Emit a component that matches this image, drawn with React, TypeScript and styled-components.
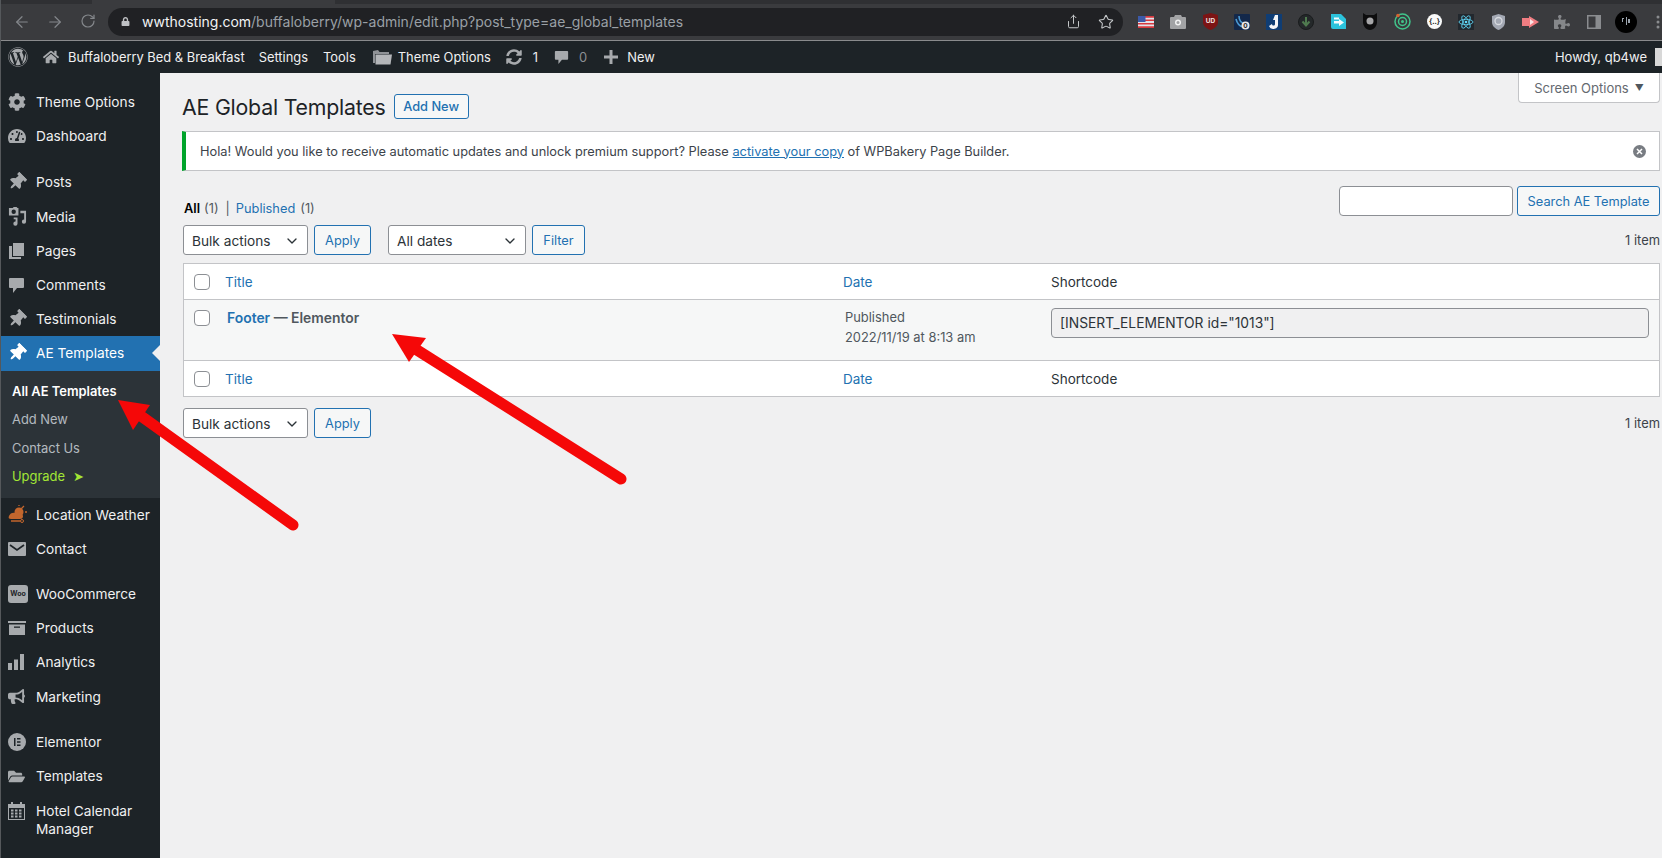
import React from 'react';
import styled, { createGlobalStyle } from 'styled-components';
import { ArrowLeft, ArrowRight, RotateCw, Share, Star, ChevronDown } from 'lucide-react';
import {
  FaWordpress, FaCog, FaTachometerAlt, FaThumbtack, FaHome, FaFolderOpen, FaSyncAlt, FaPuzzlePiece, FaBullhorn, FaLock,
} from 'react-icons/fa';

const GlobalStyle = createGlobalStyle`
  html, body { margin: 0; padding: 0; background: #f0f0f1; overflow: hidden; }
  * { box-sizing: border-box; }
  body { font-family: Inter, "Liberation Sans", sans-serif; font-size: 13.4px; color: #3c434a; }
`;

const Page = styled.div`
  position: relative;
  width: 1662px;
  height: 858px;
  overflow: hidden;
  display: flex;
  flex-direction: column;
  border-left: 1px solid #55585b;
`;

/* Browser chrome */
const TabStrip = styled.div`
  height: 4px;
  background: #2f3033;
  display: flex;
`;
const TabPiece = styled.div`
  width: 243px;
  margin-left: 91px;
  background: #3a3b3e;
`;
const Toolbar = styled.div`
  height: 37px;
  background: #3a3b3e;
  border-bottom: 1px solid #8a8b8d;
  display: flex;
  align-items: center;
  overflow: hidden;
  flex: none;
  padding-bottom: 1px;
`;
const NavButtons = styled.div`
  display: flex;
  padding-left: 4px;
  width: 107px;
  flex: none;
  color: #84878b;
`;
const NavSlot = styled.div`
  width: 33px;
  display: flex;
  justify-content: center;
`;
const UrlBar = styled.div`
  width: 1015px;
  height: 28px;
  border-radius: 14px;
  background: #202124;
  display: flex;
  align-items: center;
  padding: 0 9px 0 13px;
  flex: none;
`;
const LockGlyph = styled.span`
  color: #bfc1c4;
  font-size: 9px;
  display: flex;
  margin-right: 12px;
`;
const UrlHost = styled.span`
  color: #f1f3f4;
  font-size: 14px;
`;
const UrlPath = styled.span`
  color: #9aa0a6;
  font-size: 14px;
`;
const UrlActions = styled.div`
  margin-left: auto;
  display: flex;
  align-items: center;
  gap: 17px;
  color: #c4c7c9;
`;
const Extensions = styled.div`
  display: flex;
  margin-left: 7px;
  flex: none;
`;
const ExtSlot = styled.div`
  width: 32px;
  height: 24px;
  display: flex;
  align-items: center;
  justify-content: center;
  color: #85878a;
`;

/* Admin bar */
const AdminBar = styled.div`
  height: 32px;
  flex: none;
  background: #1d2327;
  color: #f0f0f1;
  display: flex;
  align-items: center;
  padding-left: 7px;
  font-size: 12.9px;
`;
const BarIcon = styled.span<{ $w: number; $mr: number }>`
  width: ${(p) => p.$w}px;
  margin-right: ${(p) => p.$mr}px;
  flex: none;
  display: flex;
  justify-content: center;
  color: #a7aaad;
`;
const BarText = styled.span<{ $mr: number; $dim?: boolean }>`
  margin-right: ${(p) => p.$mr}px;
  white-space: nowrap;
  color: ${(p) => (p.$dim ? '#8c8f94' : '#f0f0f1')};
`;
const BarRight = styled.div`
  margin-left: auto;
  display: flex;
  align-items: center;
  gap: 8px;
  font-size: 13px;
`;
const Avatar = styled.div`
  width: 7px;
  height: 18px;
  background: #d8d8d8;
`;

/* Columns */
const Columns = styled.div`
  flex: 1;
  display: flex;
  min-height: 0;
`;

/* Sidebar */
const Sidebar = styled.nav`
  width: 159px;
  flex: none;
  background: #1d2327;
  padding-top: 12px;
  color: #f0f0f1;
  font-size: 13.7px;
`;
const MenuItem = styled.div<{ $gap?: number; $active?: boolean; $tall?: boolean }>`
  position: relative;
  height: ${(p) => (p.$tall ? '52px' : '34.2px')};
  margin-top: ${(p) => p.$gap ?? 0}px;
  display: flex;
  align-items: ${(p) => (p.$tall ? 'flex-start' : 'center')};
  padding-top: ${(p) => (p.$tall ? '8px' : '0')};
  background: ${(p) => (p.$active ? '#2271b1' : 'transparent')};
  color: ${(p) => (p.$active ? '#fff' : '#f0f0f1')};
  line-height: 18px;
`;
const MenuIcon = styled.span<{ $active?: boolean }>`
  width: 35px;
  flex: none;
  padding-left: 7px;
  display: flex;
  align-items: center;
  color: ${(p) => (p.$active ? '#fff' : '#a7aaad')};
`;
const MenuLabel = styled.span`
  white-space: pre-line;
`;
const ActiveNotch = styled.span`
  position: absolute;
  right: 0;
  top: 50%;
  margin-top: -8px;
  border: 8px solid transparent;
  border-right-color: #f0f0f1;
  border-left-width: 0;
`;
const SubMenu = styled.div`
  background: #2c3338;
  padding: 7px 0 0 11px;
  height: 127.500px;
  font-size: 12.9px;
`;
const SubItem = styled.div<{ $current?: boolean; $accent?: boolean }>`
  height: 28.3px;
  display: flex;
  align-items: center;
  gap: 8px;
  font-weight: ${(p) => (p.$current ? 600 : 400)};
  color: ${(p) => (p.$current ? '#fff' : p.$accent ? '#a3e635' : 'rgba(240,246,252,0.7)')};
`;

/* Main */
const Main = styled.main`
  position: relative;
  flex: 1;
  padding: 21px 2px 0 22px;
  min-width: 0;
`;
const ScreenTab = styled.div`
  position: absolute;
  top: 0;
  right: 2px;
  width: 142px;
  height: 30px;
  background: #fff;
  border: 1px solid #c3c4c7;
  border-top: 0;
  border-radius: 0 0 4px 4px;
  display: flex;
  align-items: center;
  justify-content: center;
  gap: 6px;
  font-size: 13px;
  color: #646970;
`;
const Caret = styled.span`
  font-size: 9px;
  color: #50575e;
`;
const TitleRow = styled.div`
  display: flex;
  align-items: center;
  gap: 8px;
  height: 25px;
`;
const Heading = styled.h1`
  margin: 0;
  font-size: 21.3px;
  font-weight: 400;
  color: #1d2327;
  letter-spacing: -0.2px;
`;
const Button = styled.div<{ $w: number; $h?: number; $solid?: boolean }>`
  width: ${(p) => p.$w}px;
  height: ${(p) => p.$h ?? 30}px;
  padding-top: ${(p) => (p.$h ? 0 : 1)}px;
  flex: none;
  border: 1px solid #2271b1;
  border-radius: 3px;
  background: #f6f7f7;
  color: #2271b1;
  font-size: 12.8px;
  font-weight: ${(p) => (p.$solid ? 500 : 400)};
  display: flex;
  align-items: center;
  justify-content: center;
`;
const Notice = styled.div`
  margin-top: 12px;
  height: 40px;
  background: #fff;
  border: 1px solid #c3c4c7;
  border-left: 4px solid #00a32a;
  display: flex;
  align-items: center;
  padding-left: 14px;
  padding-right: 13px;
  font-size: 12.8px;
  color: #3c434a;
`;
const NoticeLink = styled.a`
  color: #2271b1;
  text-decoration: underline;
`;
const Dismiss = styled.span`
  margin-left: auto;
  width: 13px;
  height: 13px;
  border-radius: 50%;
  background: #787c82;
  display: flex;
  align-items: center;
  justify-content: center;
`;
const FilterRow = styled.div`
  margin-top: 15px;
  height: 30px;
  display: flex;
  align-items: flex-end;
  justify-content: space-between;
`;
const StatusLinks = styled.div`
  padding-left: 2px;
  display: flex;
  line-height: 16px;
  font-size: 12.8px;
  color: #50575e;
  margin-bottom: -1px;
`;
const StatusStrong = styled.span`
  color: #000;
  font-weight: 600;
  margin-right: 4px;
`;
const StatusDivider = styled.span`
  margin: 0 6px 0 7px;
`;
const StatusLink = styled.span`
  color: #2271b1;
  margin-right: 5px;
`;
const SearchBox = styled.div`
  display: flex;
  gap: 4px;
`;
const SearchInput = styled.input`
  width: 174px;
  height: 30px;
  background: #fff;
  border: 1px solid #8c8f94;
  border-radius: 4px;
`;
const TableNav = styled.div<{ $top: number }>`
  margin-top: ${(p) => p.$top}px;
  height: 30px;
  padding-left: 1px;
  display: flex;
  align-items: center;
  gap: 6px;
`;
const SelectBox = styled.div<{ $w: number; $ml?: number }>`
  width: ${(p) => p.$w}px;
  margin-left: ${(p) => p.$ml ?? 0}px;
  height: 30px;
  flex: none;
  background: #fff;
  border: 1px solid #8c8f94;
  border-radius: 3px;
  padding: 1px 7px 0 8px;
  display: flex;
  align-items: center;
  justify-content: space-between;
  color: #2c3338;
  font-size: 13.7px;
`;
const ItemCount = styled.span`
  margin-left: auto;
  font-size: 12.9px;
  color: #3c434a;
`;
const Table = styled.div`
  margin-top: 8px;
  border: 1px solid #c3c4c7;
  background: #fff;
  margin-left: 1px;
`;
const Row = styled.div<{ $h: number; $body?: boolean }>`
  height: ${(p) => p.$h}px;
  display: grid;
  grid-template-columns: 33px 618px 208px 1fr;
  background: ${(p) => (p.$body ? '#f6f7f7' : '#fff')};
  border-top: ${(p) => (p.$body ? '1px solid #c3c4c7' : 'none')};
  border-bottom: ${(p) => (p.$body ? '1px solid #c3c4c7' : 'none')};
  font-size: 13.5px;
`;
const Cell = styled.div<{ $top?: number; $pl?: number }>`
  padding-left: ${(p) => p.$pl ?? 8}px;
  padding-top: ${(p) => p.$top ?? 0}px;
  display: flex;
  align-items: ${(p) => (p.$top !== undefined ? 'flex-start' : 'center')};
`;
const CheckCell = styled(Cell)`
  padding-left: 10px;
`;
const Check = styled.span`
  width: 16px;
  height: 16px;
  flex: none;
  background: #fff;
  border: 1px solid #8c8f94;
  border-radius: 4px;
`;
const ColLink = styled.span`
  color: #2271b1;
`;
const ColLabel = styled.span`
  color: #2c3338;
`;
const RowTitle = styled.span`
  padding-left: 2px;
  font-size: 13.9px;
  font-weight: 600;
  color: #50575e;
  line-height: 18px;
`;
const RowLink = styled.span`
  color: #2271b1;
`;
const DateText = styled.div`
  padding-left: 2px;
  font-size: 12.9px;
  line-height: 20px;
  color: #50575e;
`;
const ShortcodeInput = styled.input`
  width: 598px;
  height: 30px;
  margin-top: -1px;
  padding: 0 8px;
  background: #f0f0f1;
  border: 1px solid #8c8f94;
  border-radius: 4px;
  font-family: inherit;
  font-size: 13.8px;
  color: #2c3338;
`;
const ArrowLayer = styled.svg`
  position: absolute;
  left: -1px;
  top: 0;
  pointer-events: none;
`;

/* Drawn icons */
const s = { display: 'block' } as const;
const pin = { display: 'block', transform: 'rotate(45deg)' } as const;
const MediaIcon = () => (
  <svg width="19" height="19" viewBox="0 0 20 20" fill="currentColor" style={s}>
    <path d="M1 1h4l1-1h3l1 1h1v8H1z" />
    <circle cx="6" cy="5" r="2.300" fill="#1d2327" />
    <path d="M13 4h6v11.500a2.200 2.200 0 1 1-2-2.200V6.500h-4z" />
    <path d="M6 11h4v6.500a2.200 2.200 0 1 1-2-2.200V13H6z" />
  </svg>
);
const PagesIcon = () => (
  <svg width="17" height="18" viewBox="0 0 17 18" fill="currentColor" style={s}>
    <path d="M5 1h11v13H5z" />
    <path d="M1 4h3v11h9v2H1z" />
  </svg>
);
const CommentIcon = ({ size = 17 }: { size?: number }) => (
  <svg width={size} height={size} viewBox="0 0 17 17" fill="currentColor" style={s}>
    <path d="M2 1h13a1 1 0 0 1 1 1v8a1 1 0 0 1-1 1H9l-4 5v-5H2a1 1 0 0 1-1-1V2a1 1 0 0 1 1-1z" />
  </svg>
);
const BarFolderIcon = () => (
  <svg width="20" height="16" viewBox="0 0 20 16" style={s}>
    <path d="M1 2l5-1 1.500 2H17v2H3v9H1z" fill="#8f9296" />
    <path d="M3.500 5.500H20l-1.500 10H3.500z" fill="#b4b6b9" />
  </svg>
);
const WeatherIcon = () => (
  <svg width="20" height="20" viewBox="0 0 20 20" style={s}>
    <circle cx="11" cy="7" r="4.500" fill="#c2662d" />
    <path d="M1 11c1-3 4-4 7-3 3-1 7 0 7 3s-2 3-5 3H3c-2 0-3-1-2-3z" fill="#c2662d" />
    <path d="M3 16h9M13 4l3-3M17 7h2M11 1V0" stroke="#c2662d" strokeWidth="1.300" fill="none" />
    <circle cx="14" cy="16" r="1.500" fill="none" stroke="#c2662d" />
  </svg>
);
const MailIcon = () => (
  <svg width="18" height="14" viewBox="0 0 18 14" style={s}>
    <rect width="18" height="14" rx="1" fill="currentColor" />
    <path d="M2 3l7 5 7-5" stroke="#1d2327" strokeWidth="1.700" fill="none" />
  </svg>
);
const WooMark = styled.span`
  width: 20px;
  height: 18px;
  border-radius: 3px;
  background: #a7aaad;
  color: #1d2327;
  font-size: 7px;
  font-weight: 700;
  display: flex;
  align-items: center;
  justify-content: center;
`;
const ProductsIcon = () => (
  <svg width="18" height="14" viewBox="0 0 18 14" fill="currentColor" style={s}>
    <rect width="18" height="2" />
    <path d="M1 3.500h16V14H1z" />
    <rect x="6" y="5.500" width="6" height="1.300" fill="#1d2327" />
  </svg>
);
const BarsIcon = () => (
  <svg width="16" height="16" viewBox="0 0 16 16" fill="currentColor" style={s}>
    <rect y="9" width="4" height="7" />
    <rect x="6" y="5.500" width="4" height="10.500" />
    <rect x="12" width="4" height="16" />
  </svg>
);
const ElementorIcon = () => (
  <svg width="18" height="18" viewBox="0 0 18 18" style={s}>
    <circle cx="9" cy="9" r="9" fill="currentColor" />
    <path d="M6 5h1.500v8H6zM9 5h3.500v1.500H9zM9 8.250h3.500v1.500H9zM9 11.500h3.500V13H9z" fill="#1d2327" />
  </svg>
);
const CalendarIcon = () => (
  <svg width="17" height="18" viewBox="0 0 17 18" style={s}>
    <rect x="0.500" y="2.500" width="16" height="15" fill="none" stroke="currentColor" />
    <rect x="0.500" y="2.500" width="16" height="3.500" fill="currentColor" />
    <rect x="3" y="0" width="2" height="4" fill="currentColor" />
    <rect x="12" y="0" width="2" height="4" fill="currentColor" />
    {[7.5, 10.5, 13.5].map((y) =>
      [3, 7, 11].map((x) => <rect key={`${x}-${y}`} x={x} y={y} width="2.500" height="2" fill="currentColor" />),
    )}
  </svg>
);
const PlusIcon = () => (
  <svg width="14" height="14" viewBox="0 0 14 14" fill="currentColor" style={s}>
    <path d="M5.500 0h3v5.500H14v3H8.500V14h-3V8.500H0v-3h5.500z" />
  </svg>
);

const extIcons = [
  <svg key="flag" width="16" height="12" viewBox="0 0 16 12" style={s}>
    <rect width="16" height="12" fill="#e2e2ea" />
    <path d="M0 0h16v1.700H0zM0 3.400h16v1.700H0zM0 6.900h16v1.700H0zM0 10.300h16V12H0z" fill="#d8383e" />
    <rect width="7.500" height="6" fill="#3c5aa8" />
  </svg>,
  <svg key="cam" width="16" height="14" viewBox="0 0 16 14" style={s}>
    <path d="M1 2h3l1-2h6l1 2h3a1 1 0 0 1 1 1v10a1 1 0 0 1-1 1H1a1 1 0 0 1-1-1V3a1 1 0 0 1 1-1z" fill="#a2a3a5" />
    <circle cx="8" cy="7.500" r="3" fill="#f2f2f2" />
    <circle cx="8" cy="7.500" r="1.500" fill="#a2a3a5" />
  </svg>,
  <svg key="ub" width="15" height="17" viewBox="0 0 15 17" style={s}>
    <path d="M7.500 0L15 2v7c0 4-3.500 6.500-7.500 8C3.500 15.500 0 13 0 9V2z" fill="#7c1414" />
    <text x="7.500" y="10" textAnchor="middle" fontSize="6.500" fontWeight="700" fill="#f3e6e6" fontFamily="Inter">UD</text>
  </svg>,
  <svg key="dns" width="16" height="16" viewBox="0 0 16 16" style={s}>
    <rect width="16" height="16" rx="1" fill="#13284a" />
    <path d="M2 5c1 4 3 7 7 8M5 2c0 4 2 7 6 8" stroke="#4a9ad4" strokeWidth="1.600" fill="none" />
    <circle cx="11.500" cy="11.500" r="4" fill="#e8e8e8" />
    <text x="11.500" y="14" textAnchor="middle" fontSize="6.500" fontWeight="700" fill="#222" fontFamily="Inter">0</text>
  </svg>,
  <svg key="j" width="16" height="16" viewBox="0 0 16 16" style={s}>
    <rect width="16" height="16" fill="#0f3d74" />
    <path d="M9 1h3v10c0 3-3 4-5 4s-3-1-4-3l3-2c0 2 3 2 3 0V6H7z" fill="#f4f6f8" />
  </svg>,
  <svg key="dl" width="16" height="16" viewBox="0 0 16 16" style={s}>
    <circle cx="8" cy="8" r="7.500" fill="#24282a" stroke="#1a1c1d" />
    <path d="M8 3v8M4.500 7.500L8 11.500l3.500-4" stroke="#4f7a4f" strokeWidth="2" fill="none" />
  </svg>,
  <svg key="doc" width="15" height="15" viewBox="0 0 15 15" style={s}>
    <path d="M0 0h10l5 5v10H2a2 2 0 0 1-2-2z" fill="#2cc3dc" />
    <path d="M3 3.500h5v2H3zM3 7h5V5l5 3.500L8 12V9.500H3z" fill="#f4fbfd" />
  </svg>,
  <svg key="cat" width="14" height="17" viewBox="0 0 14 17" style={s}>
    <path d="M0 0l3 2h8l3-2v9c0 4-3 8-7 8S0 13 0 9z" fill="#0d0d0e" />
    <circle cx="7" cy="8" r="3.500" fill="#a6a6a8" />
  </svg>,
  <svg key="ring" width="17" height="17" viewBox="0 0 17 17" style={s}>
    <circle cx="8.500" cy="8.500" r="7.500" fill="none" stroke="#41c48b" strokeWidth="1.500" />
    <circle cx="8.500" cy="8.500" r="4" fill="none" stroke="#41c48b" strokeWidth="1.500" />
    <circle cx="8.500" cy="8.500" r="1.500" fill="#41c48b" />
    <circle cx="4" cy="2.500" r="1.800" fill="#d8632f" />
  </svg>,
  <svg key="json" width="15" height="15" viewBox="0 0 15 15" style={s}>
    <circle cx="7.500" cy="7.500" r="7.500" fill="#fafafa" />
    <text x="7.500" y="10" textAnchor="middle" fontSize="7" fontWeight="700" fill="#222" fontFamily="Inter">{'{..}'}</text>
  </svg>,
  <svg key="react" width="16" height="16" viewBox="0 0 16 16" style={s}>
    <rect width="16" height="16" fill="#22282e" />
    <g fill="none" stroke="#61dafb" strokeWidth="0.800">
      <ellipse cx="8" cy="8" rx="7" ry="2.700" />
      <ellipse cx="8" cy="8" rx="7" ry="2.700" transform="rotate(60 8 8)" />
      <ellipse cx="8" cy="8" rx="7" ry="2.700" transform="rotate(120 8 8)" />
    </g>
    <circle cx="8" cy="8" r="1.300" fill="#61dafb" />
  </svg>,
  <svg key="shield" width="13" height="16" viewBox="0 0 13 16" style={s}>
    <path d="M6.500 0L13 2v6c0 4-3 6.500-6.500 8C3 14.500 0 12 0 8V2z" fill="#a3a8b3" />
    <circle cx="6.500" cy="7" r="3.500" fill="none" stroke="#d8dbe0" strokeWidth="1.300" />
  </svg>,
  <svg key="play" width="17" height="12" viewBox="0 0 17 12" style={s}>
    <path d="M0 2h7V0l10 6-10 6v-2H0z" fill="#ef7d82" />
    <path d="M8 3v6l4-3z" fill="#fbe5e6" />
  </svg>,
  <FaPuzzlePiece key="puzzle" size={16} style={s} />,
  <svg key="panel" width="14" height="14" viewBox="0 0 14 14" style={s}>
    <rect width="14" height="14" fill="#8a8c8f" />
    <rect x="1.500" y="1.500" width="7" height="11" fill="#3a3b3e" />
  </svg>,
  <svg key="me" width="22" height="22" viewBox="0 0 22 22" style={s}>
    <circle cx="11" cy="11" r="11" fill="#000" />
    <path d="M7 7h2v1H8v3H7zM11 6h1v8h-1zM13 8h2v4h-2z" fill="#9aa3ad" />
  </svg>,
  <svg key="dots" width="4" height="14" viewBox="0 0 4 14" fill="#8a8c8f" style={s}>
    <circle cx="2" cy="2" r="1.500" />
    <circle cx="2" cy="7" r="1.500" />
    <circle cx="2" cy="12" r="1.500" />
  </svg>,
];

type Entry = { label: string; icon: React.ReactNode; gap?: number };
const groupA: Entry[] = [
  { label: 'Theme Options', icon: <FaCog size={18} style={s} /> },
  { label: 'Dashboard', icon: <FaTachometerAlt size={18} style={s} /> },
  { label: 'Posts', icon: <FaThumbtack size={18} style={pin} />, gap: 12 },
  { label: 'Media', icon: <MediaIcon /> },
  { label: 'Pages', icon: <PagesIcon /> },
  { label: 'Comments', icon: <CommentIcon /> },
  { label: 'Testimonials', icon: <FaThumbtack size={18} style={pin} /> },
];
const groupB: Entry[] = [
  { label: 'Location Weather', icon: <WeatherIcon /> },
  { label: 'Contact', icon: <MailIcon /> },
  { label: 'WooCommerce', icon: <WooMark>Woo</WooMark>, gap: 10.5 },
  { label: 'Products', icon: <ProductsIcon /> },
  { label: 'Analytics', icon: <BarsIcon /> },
  { label: 'Marketing', icon: <FaBullhorn size={17} style={s} /> },
  { label: 'Elementor', icon: <ElementorIcon />, gap: 11.5 },
  { label: 'Templates', icon: <FaFolderOpen size={17} style={s} /> },
];

const Entries = ({ items }: { items: Entry[] }) => (
  <>
    {items.map((i) => (
      <MenuItem key={i.label} $gap={i.gap}>
        <MenuIcon>{i.icon}</MenuIcon>
        <MenuLabel>{i.label}</MenuLabel>
      </MenuItem>
    ))}
  </>
);

const Select = ({ w, ml, label }: { w: number; ml?: number; label: string }) => (
  <SelectBox $w={w} $ml={ml}>
    {label}
    <ChevronDown size={16} color="#2c3338" />
  </SelectBox>
);

const HeadRow = ({ h }: { h: number }) => (
  <Row $h={h}>
    <CheckCell><Check /></CheckCell>
    <Cell><ColLink>Title</ColLink></Cell>
    <Cell><ColLink>Date</ColLink></Cell>
    <Cell><ColLabel>Shortcode</ColLabel></Cell>
  </Row>
);

export default function App() {
  return (
    <Page>
      <GlobalStyle />
      <TabStrip><TabPiece /></TabStrip>
      <Toolbar>
        <NavButtons>
          <NavSlot><ArrowLeft size={18} strokeWidth={1.6} /></NavSlot>
          <NavSlot><ArrowRight size={18} strokeWidth={1.6} /></NavSlot>
          <NavSlot><RotateCw size={16} strokeWidth={1.8} /></NavSlot>
        </NavButtons>
        <UrlBar>
          <LockGlyph><FaLock /></LockGlyph>
          <UrlHost>wwthosting.com</UrlHost>
          <UrlPath>/buffaloberry/wp-admin/edit.php?post_type=ae_global_templates</UrlPath>
          <UrlActions>
            <Share size={15} strokeWidth={1.6} />
            <Star size={16} strokeWidth={1.6} />
          </UrlActions>
        </UrlBar>
        <Extensions>
          {extIcons.map((icon, i) => <ExtSlot key={i}>{icon}</ExtSlot>)}
        </Extensions>
      </Toolbar>
      <AdminBar>
        <BarIcon $w={20} $mr={15}><FaWordpress size={20} style={s} /></BarIcon>
        <BarIcon $w={16} $mr={9}><FaHome size={18} style={s} /></BarIcon>
        <BarText $mr={14}>Buffaloberry Bed &amp; Breakfast</BarText>
        <BarText $mr={15}>Settings</BarText>
        <BarText $mr={16}>Tools</BarText>
        <BarIcon $w={20} $mr={6}><BarFolderIcon /></BarIcon>
        <BarText $mr={15}>Theme Options</BarText>
        <BarIcon $w={17} $mr={10}><FaSyncAlt size={16} style={s} /></BarIcon>
        <BarText $mr={16}>1</BarText>
        <BarIcon $w={15} $mr={10}><CommentIcon size={15} /></BarIcon>
        <BarText $mr={17} $dim>0</BarText>
        <BarIcon $w={14} $mr={9}><PlusIcon /></BarIcon>
        <BarText $mr={0}>New</BarText>
        <BarRight>
          <BarText $mr={0}>Howdy, qb4we</BarText>
          <Avatar />
        </BarRight>
      </AdminBar>
      <Columns>
        <Sidebar>
          <Entries items={groupA} />
          <MenuItem $active>
            <MenuIcon $active><FaThumbtack size={18} style={pin} /></MenuIcon>
            <MenuLabel>AE Templates</MenuLabel>
            <ActiveNotch />
          </MenuItem>
          <SubMenu>
            <SubItem $current>All AE Templates</SubItem>
            <SubItem>Add New</SubItem>
            <SubItem>Contact Us</SubItem>
            <SubItem $accent>Upgrade <span>➤</span></SubItem>
          </SubMenu>
          <Entries items={groupB} />
          <MenuItem $tall>
            <MenuIcon><CalendarIcon /></MenuIcon>
            <MenuLabel>{'Hotel Calendar\nManager'}</MenuLabel>
          </MenuItem>
        </Sidebar>
        <Main>
          <ScreenTab>Screen Options <Caret>▼</Caret></ScreenTab>
          <TitleRow>
            <Heading>AE Global Templates</Heading>
            <Button $w={75} $h={25} $solid>Add New</Button>
          </TitleRow>
          <Notice>
            <span>
              Hola! Would you like to receive automatic updates and unlock premium support? Please{' '}
              <NoticeLink>activate your copy</NoticeLink> of WPBakery Page Builder.
            </span>
            <Dismiss>
              <svg width="7" height="7" viewBox="0 0 7 7" style={s}>
                <path d="M1 1l5 5M6 1L1 6" stroke="#fff" strokeWidth="1.500" />
              </svg>
            </Dismiss>
          </Notice>
          <FilterRow>
            <StatusLinks>
              <StatusStrong>All</StatusStrong> (1)
              <StatusDivider>|</StatusDivider>
              <StatusLink>Published</StatusLink> (1)
            </StatusLinks>
            <SearchBox>
              <SearchInput readOnly />
              <Button $w={143}>Search AE Template</Button>
            </SearchBox>
          </FilterRow>
          <TableNav $top={9}>
            <Select w={125} label="Bulk actions" />
            <Button $w={57}>Apply</Button>
            <Select w={138} ml={11} label="All dates" />
            <Button $w={53}>Filter</Button>
            <ItemCount>1 item</ItemCount>
          </TableNav>
          <Table>
            <HeadRow h={35} />
            <Row $h={62} $body>
              <CheckCell $top={10}><Check /></CheckCell>
              <Cell $top={9}><RowTitle><RowLink>Footer</RowLink> — Elementor</RowTitle></Cell>
              <Cell $top={8}><DateText>Published<br />2022/11/19 at 8:13 am</DateText></Cell>
              <Cell $top={9}><ShortcodeInput readOnly value={'[INSERT_ELEMENTOR id="1013"]'} /></Cell>
            </Row>
            <HeadRow h={35} />
          </Table>
          <TableNav $top={11}>
            <Select w={125} label="Bulk actions" />
            <Button $w={57}>Apply</Button>
            <ItemCount>1 item</ItemCount>
          </TableNav>
        </Main>
      </Columns>
      <ArrowLayer width="1662" height="858" viewBox="0 0 1662 858">
        <g stroke="#f50808" strokeWidth="11" strokeLinecap="round" fill="none">
          <path d="M141 416L293 525" />
          <path d="M417 350L621 479" />
        </g>
        <path d="M118 400L150 405L133 430Z" fill="#f50808" />
        <path d="M392 334L426 338L409 362Z" fill="#f50808" />
      </ArrowLayer>
    </Page>
  );
}
